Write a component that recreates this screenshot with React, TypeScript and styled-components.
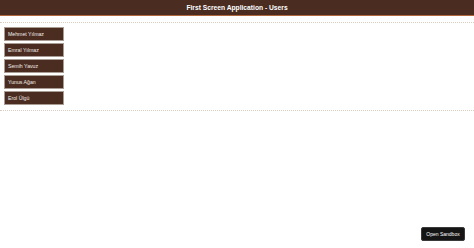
import styled, { createGlobalStyle } from "styled-components";

const users = ["Mehmet Yılmaz", "Emral Yılmaz", "Semih Yavuz", "Yunus Ağan", "Erol Ülgü"];

const GlobalStyle = createGlobalStyle`
	html, body {
		margin: 0;
		padding: 0;
		background: #ffffff;
		font-family: "Liberation Sans", Arial, sans-serif;
	}
`;

const App = () => {
	return (
		<Page>
			<GlobalStyle />
			<Header>First Screen Application - Users</Header>
			<UserList>
				{users.map((name) => (
					<UserButton key={name}>{name}</UserButton>
				))}
			</UserList>
			<SandboxButton>Open Sandbox</SandboxButton>
		</Page>
	);
};

const Page = styled.div`
	position: relative;
	height: 248px;
	overflow: hidden;
`;

const Header = styled.div`
	height: 15px;
	background: #4a2c21;
	border-bottom: 1px solid #b0673c;
	color: #ffffff;
	font-weight: 700;
	font-size: 6.7px;
	display: flex;
	align-items: center;
	justify-content: center;
`;

const UserList = styled.div`
	margin-top: 6px;
	border-top: 1px dotted #d8cdc4;
	border-bottom: 1px dotted #d8cdc4;
	padding: 4px 4px 5px;
	display: flex;
	flex-direction: column;
	align-items: flex-start;
	gap: 2px;
`;

const UserButton = styled.button`
	width: 60px;
	height: 14px;
	padding: 0 3px;
	background: #4a2c21;
	border: 1px solid #a89c95;
	color: #f2ece8;
	font-family: "Liberation Sans", Arial, sans-serif;
	font-size: 5.2px;
	text-align: left;
	cursor: pointer;
`;

const SandboxButton = styled.button`
	position: absolute;
	right: 9px;
	bottom: 7px;
	width: 44px;
	height: 14px;
	padding: 0;
	background: #151515;
	border: 1px solid #3a3a3a;
	border-radius: 2px;
	color: #ffffff;
	font-family: "Liberation Sans", Arial, sans-serif;
	font-size: 5px;
	cursor: pointer;
`;

export default App;
